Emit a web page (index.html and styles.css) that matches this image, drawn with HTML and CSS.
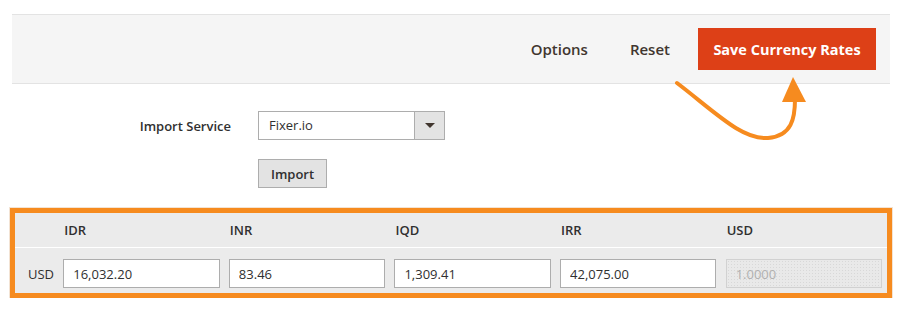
FILE: index.html
```html
<!DOCTYPE html>
<html lang="en">
<head>
    <meta charset="UTF-8">
    <title>Currency Rates</title>
    <link rel="stylesheet" href="styles.css">
</head>
<body>
    <div class="page">
        <div class="page-actions">
            <button class="action-link">Options</button>
            <button class="action-link">Reset</button>
            <button class="action-primary">Save Currency Rates</button>
        </div>

        <svg class="callout-arrow" width="903" height="160" viewBox="0 0 903 160">
            <path d="M677 83 C 715 112, 742 140, 768 138 C 792 136, 795 118, 795 99" fill="none" stroke="#f68b1f" stroke-width="4" stroke-linecap="round"/>
            <polygon points="793,77 782,102 806,102" fill="#f68b1f"/>
        </svg>

        <div class="import-form">
            <div class="form-row">
                <label class="form-label">Import Service</label>
                <div class="select">
                    <span class="select-value">Fixer.io</span>
                    <span class="select-toggle"></span>
                </div>
            </div>
            <div class="form-row">
                <span class="form-label"></span>
                <button class="action-default">Import</button>
            </div>
        </div>

        <div class="rates-table">
            <div class="rates-head">
                <span></span>
                <span>IDR</span>
                <span>INR</span>
                <span>IQD</span>
                <span>IRR</span>
                <span>USD</span>
            </div>
            <div class="rates-row">
                <span class="rate-code">USD</span>
                <input class="rate-input" type="text" value="16,032.20">
                <input class="rate-input" type="text" value="83.46">
                <input class="rate-input" type="text" value="1,309.41">
                <input class="rate-input" type="text" value="42,075.00">
                <input class="rate-input" type="text" value="1.0000" disabled>
            </div>
        </div>
    </div>
</body>
</html>
```

FILE: styles.css
```css
* {
    margin: 0;
    padding: 0;
    box-sizing: border-box;
}

body {
    font-family: "Open Sans", "Liberation Sans", sans-serif;
    font-size: 13px;
    color: #303030;
    background: #ffffff;
}

.page {
    position: relative;
    padding-top: 14px;
}

button,
input {
    font-family: inherit;
    font-size: 13px;
    color: #303030;
}

/* top action bar */
.page-actions {
    margin: 0 13px 0 12px;
    height: 70px;
    background: #f5f5f5;
    border-top: 1px solid #e3e3e3;
    border-bottom: 1px solid #e3e3e3;
    display: flex;
    align-items: center;
    justify-content: flex-end;
    padding-right: 14px;
}

.action-link {
    background: none;
    border: none;
    font-size: 15px;
    font-weight: 600;
    color: #41362f;
    padding: 0 14px;
    height: 42px;
    margin-right: 14px;
    cursor: pointer;
}

.action-primary {
    background: #dd4017;
    border: none;
    color: #ffffff;
    font-weight: 700;
    font-size: 14.5px;
    width: 178px;
    height: 42px;
    cursor: pointer;
}

.callout-arrow {
    position: absolute;
    left: 0;
    top: 0;
    pointer-events: none;
}

/* import form */
.import-form {
    padding-top: 27px;
}

.form-row {
    display: flex;
    align-items: center;
    margin-bottom: 19px;
}

.form-label {
    width: 231px;
    margin-right: 27px;
    text-align: right;
    font-weight: 600;
}

.select {
    width: 187px;
    height: 29px;
    border: 1px solid #adadad;
    display: flex;
}

.select-value {
    flex: 1;
    padding-left: 10px;
    line-height: 27px;
}

.select-toggle {
    width: 30px;
    background: #e3e3e3;
    border-left: 1px solid #adadad;
    position: relative;
}

.select-toggle::after {
    content: '';
    position: absolute;
    left: 10px;
    top: 11px;
    border-left: 5px solid transparent;
    border-right: 5px solid transparent;
    border-top: 5px solid #41362f;
}

.action-default {
    width: 69px;
    height: 29px;
    background: #e3e3e3;
    border: 1px solid #adadad;
    font-weight: 600;
    cursor: pointer;
}

/* rates table */
.rates-table {
    margin: 20px 11px 0 10px;
    border: 5px solid #f68b1f;
    background: #ebebeb;
    box-shadow: 0 0 0 1px #f3e3d3;
}

.rates-head,
.rates-row {
    display: grid;
    grid-template-columns: 39px repeat(5, 1fr);
    column-gap: 9.25px;
    padding-right: 5px;
}

.rates-head {
    height: 35px;
    align-items: center;
    font-weight: 600;
    border-bottom: 1px solid #ffffff;
}

.rates-head span {
    padding-left: 1px;
}

.rates-row {
    align-items: center;
    padding-top: 11px;
    padding-bottom: 5px;
}

.rate-code {
    text-align: right;
}

.rate-input {
    width: 100%;
    height: 29px;
    border: 1px solid #adadad;
    background: #ffffff;
    padding: 0 9px;
    outline: none;
}

.rate-input:disabled {
    border-color: #d1d1d1;
    color: #b0b0b0;
    background-color: #e9e9e9;
    background-image: radial-gradient(#d8d8d8 0.6px, transparent 0.8px);
    background-size: 3px 3px;
}
```
